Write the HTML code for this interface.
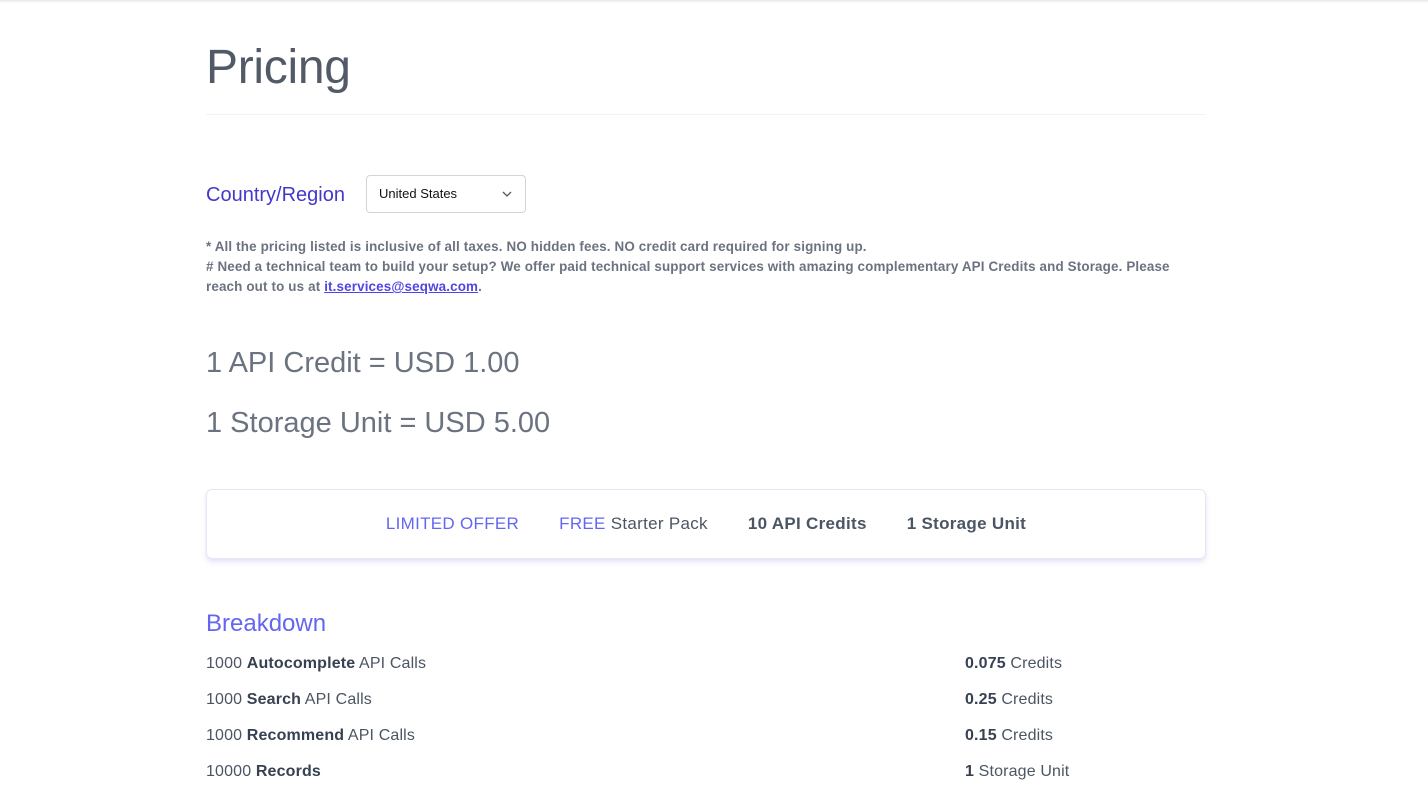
<!DOCTYPE html>
<html><head><meta charset="utf-8"><style>
body{margin:0;background:#fff;font-family:"Liberation Sans",sans-serif;color:#4b5563;width:1428px;height:806px;overflow:hidden;position:relative}
.topbar{position:absolute;top:0;left:0;right:0;height:3px;background:linear-gradient(#e5e7eb,#fff)}
.wrap{position:absolute;left:206px;width:1000px;top:0}
h1{position:absolute;top:40px;margin:0;font-weight:300;font-size:48px;color:#525a67;letter-spacing:-0.3px}
.hr{position:absolute;top:114px;width:1000px;height:1px;background:#f1f2f4}
.cr{position:absolute;top:184px;font-size:20px;color:#4338ca}
.sel{position:absolute;top:175px;left:160px;width:160px;height:38px;border:1px solid #d1d5db;border-radius:4px;font-size:13px;color:#111;box-sizing:border-box;padding:10px 12px}
.sel svg{position:absolute;right:13px;top:15px}
.note{position:absolute;top:237px;font-size:13.4px;line-height:20px;color:#6b7280;font-weight:bold;width:1000px;letter-spacing:0.15px}
.note a{color:#4f46e5;text-decoration:underline;font-weight:bold}
.big{position:absolute;font-size:29px;font-weight:300;color:#6b7280}
.card{position:absolute;top:489px;width:998px;height:68px;border:1px solid #e5e7f5;border-radius:6px;box-shadow:0 3px 5px rgba(99,102,241,.18);font-size:17px;display:flex;justify-content:center;align-items:center;gap:40px;letter-spacing:0.3px}
.b{color:#6366f1}
.g{color:#4b5563}
h2{position:absolute;top:610px;margin:0;font-weight:normal;font-size:24px;color:#6366f1}
.row{position:absolute;font-size:16px;color:#4b5563;width:1000px;letter-spacing:0.15px}
.row b{color:#374151}
.row span.r{position:absolute;left:759px}
</style></head><body>
<div class="topbar"></div>
<div class="wrap">
<h1>Pricing</h1>
<div class="hr"></div>
<div class="cr">Country/Region</div>
<div class="sel">United States<svg width="10" height="6" viewBox="0 0 10 6"><path d="M1 1l4 4 4-4" fill="none" stroke="#555" stroke-width="1.3"/></svg></div>
<div class="note">* All the pricing listed is inclusive of all taxes. NO hidden fees. NO credit card required for signing up.<br># Need a technical team to build your setup? We offer paid technical support services with amazing complementary API Credits and Storage. Please reach out to us at <a>it.services@seqwa.com</a>.</div>
<div class="big" style="top:347px">1 API Credit = USD 1.00</div>
<div class="big" style="top:407px">1 Storage Unit = USD 5.00</div>
<div class="card"><span class="b">LIMITED OFFER</span><span><span class="b">FREE</span> <span class="g">Starter Pack</span></span><b class="g">10 API Credits</b><b class="g">1 Storage Unit</b></div>
<h2>Breakdown</h2>
<div class="row" style="top:655px">1000 <b>Autocomplete</b> API Calls<span class="r"><b>0.075</b> Credits</span></div>
<div class="row" style="top:691px">1000 <b>Search</b> API Calls<span class="r"><b>0.25</b> Credits</span></div>
<div class="row" style="top:727px">1000 <b>Recommend</b> API Calls<span class="r"><b>0.15</b> Credits</span></div>
<div class="row" style="top:763px">10000 <b>Records</b><span class="r"><b>1</b> Storage Unit</span></div>
</div>
</body></html>
